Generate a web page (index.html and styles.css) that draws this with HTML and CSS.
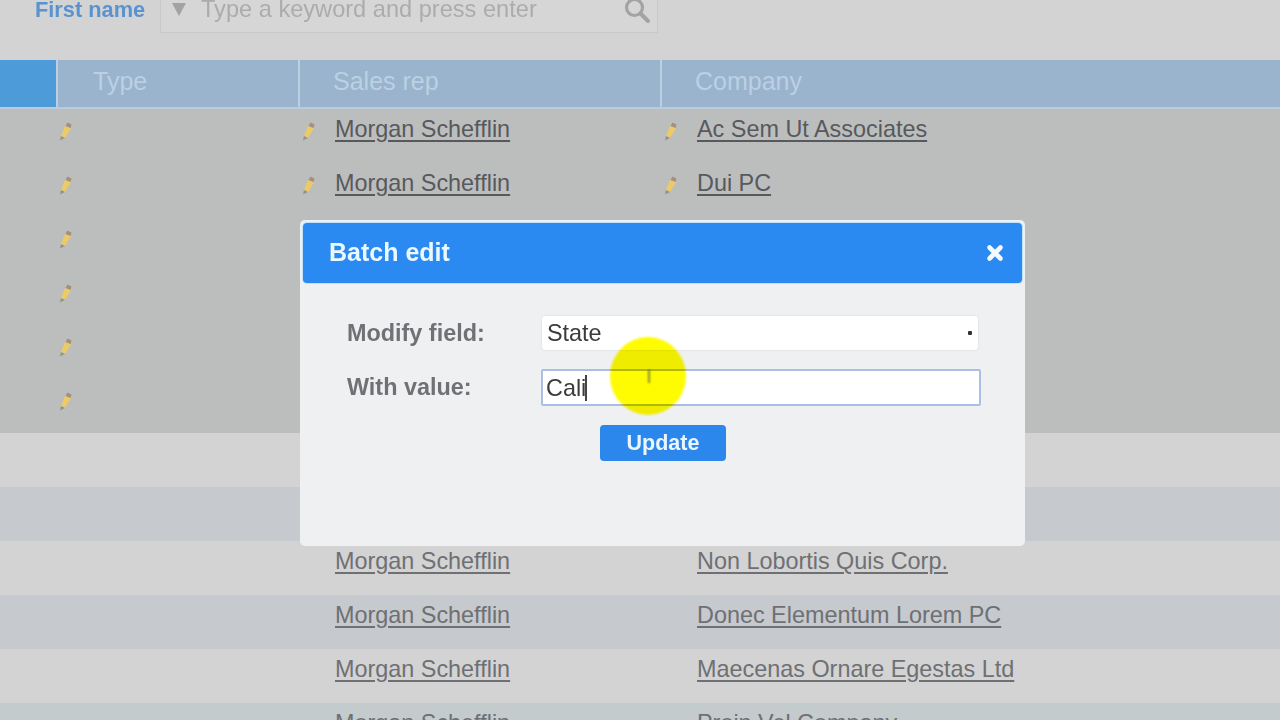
FILE: index.html
```html
<!DOCTYPE html>
<html lang="en">
<head>
<meta charset="utf-8">
<title>Batch edit</title>
<link rel="stylesheet" href="styles.css">
</head>
<body>
<svg class="defs" width="0" height="0" aria-hidden="true">
  <symbol id="pencil" viewBox="0 0 18 22">
    <path d="M4 17 L8 7 L14 9 L8 19 Z" fill="#eccb66"/>
    <path d="M8.5 7 L10.5 3.5 L14.5 5.5 L13.5 9 Z" fill="#a58f7e"/>
    <path d="M4 17 L8 19 L3 21.5 Z" fill="#93938c"/>
  </symbol>
</svg>
<main class="page">
  <div class="filter">
    <label class="filter-label">First name</label>
    <div class="search">
      <span class="caret"></span>
      <span class="placeholder">Type a keyword and press enter</span>
      <svg class="magnifier" viewBox="0 0 28 28" aria-hidden="true">
        <circle cx="11.5" cy="11.5" r="8" fill="none" stroke="#a3a3a3" stroke-width="3.2"/>
        <path d="M17.5 17.5 L25 25" stroke="#a3a3a3" stroke-width="4" stroke-linecap="round"/>
      </svg>
    </div>
  </div>
  <div class="grid">
    <div class="row head">
      <div class="cell check"></div>
      <div class="cell">Type</div>
      <div class="cell">Sales rep</div>
      <div class="cell">Company</div>
    </div>
    <div class="row selected">
      <div class="cell check"></div>
      <div class="cell"><svg class="pen"><use href="#pencil"/></svg></div>
      <div class="cell"><svg class="pen"><use href="#pencil"/></svg><a href="#">Morgan Schefflin</a></div>
      <div class="cell"><svg class="pen"><use href="#pencil"/></svg><a href="#">Ac Sem Ut Associates</a></div>
    </div>
    <div class="row selected">
      <div class="cell check"></div>
      <div class="cell"><svg class="pen"><use href="#pencil"/></svg></div>
      <div class="cell"><svg class="pen"><use href="#pencil"/></svg><a href="#">Morgan Schefflin</a></div>
      <div class="cell"><svg class="pen"><use href="#pencil"/></svg><a href="#">Dui PC</a></div>
    </div>
    <div class="row selected">
      <div class="cell check"></div>
      <div class="cell"><svg class="pen"><use href="#pencil"/></svg></div>
      <div class="cell"></div><div class="cell"></div>
    </div>
    <div class="row selected">
      <div class="cell check"></div>
      <div class="cell"><svg class="pen"><use href="#pencil"/></svg></div>
      <div class="cell"></div><div class="cell"></div>
    </div>
    <div class="row selected">
      <div class="cell check"></div>
      <div class="cell"><svg class="pen"><use href="#pencil"/></svg></div>
      <div class="cell"></div><div class="cell"></div>
    </div>
    <div class="row selected">
      <div class="cell check"></div>
      <div class="cell"><svg class="pen"><use href="#pencil"/></svg></div>
      <div class="cell"></div><div class="cell"></div>
    </div>
    <div class="row light"></div>
    <div class="row mid"></div>
    <div class="row light">
      <div class="cell check"></div><div class="cell"></div>
      <div class="cell"><span class="pen-gap"></span><a href="#">Morgan Schefflin</a></div>
      <div class="cell"><span class="pen-gap"></span><a href="#">Non Lobortis Quis Corp.</a></div>
    </div>
    <div class="row mid">
      <div class="cell check"></div><div class="cell"></div>
      <div class="cell"><span class="pen-gap"></span><a href="#">Morgan Schefflin</a></div>
      <div class="cell"><span class="pen-gap"></span><a href="#">Donec Elementum Lorem PC</a></div>
    </div>
    <div class="row light">
      <div class="cell check"></div><div class="cell"></div>
      <div class="cell"><span class="pen-gap"></span><a href="#">Morgan Schefflin</a></div>
      <div class="cell"><span class="pen-gap"></span><a href="#">Maecenas Ornare Egestas Ltd</a></div>
    </div>
    <div class="row mid last">
      <div class="cell check"></div><div class="cell"></div>
      <div class="cell"><span class="pen-gap"></span><a href="#">Morgan Schefflin</a></div>
      <div class="cell"><span class="pen-gap"></span><a href="#">Proin Vel Company</a></div>
    </div>
  </div>
</main>
<section class="modal">
  <header class="modal-head">
    <h2>Batch edit</h2>
    <svg class="close" viewBox="0 0 18 18" aria-hidden="true">
      <path d="M3.5 3.5 L14.5 14.5 M14.5 3.5 L3.5 14.5" stroke="#f2fbff" stroke-width="4.6" stroke-linecap="round"/>
    </svg>
  </header>
  <div class="modal-body">
    <div class="field">
      <span class="field-label">Modify field:</span>
      <div class="select"><span>State</span><i class="dot"></i></div>
    </div>
    <div class="field">
      <span class="field-label">With value:</span>
      <div class="input"><span>Cali</span><i class="text-caret"></i></div>
    </div>
    <button class="update" type="button">Update</button>
  </div>
</section>
<div class="pointer"><i class="ibeam"></i></div>
</body>
</html>
```

FILE: styles.css
```css
* { box-sizing: border-box; }
html, body { margin: 0; height: 100%; }
body {
  position: relative;
  width: 1280px;
  height: 720px;
  overflow: hidden;
  background: #d3d3d3;
  font-family: "Liberation Sans", Arial, sans-serif;
  font-size: 23.4px;
  color: #5e6063;
}
.defs { position: absolute; }
.page { height: 720px; overflow: hidden; filter: blur(0.6px); }

.filter {
  height: 60px;
  display: flex;
  align-items: flex-end;
  gap: 15px;
  padding: 0 0 27px 35px;
}
.filter-label {
  width: 110px;
  align-self: flex-end;
  margin-bottom: 10px;
  font-size: 21.8px;
  font-weight: 700;
  line-height: 26px;
  color: #5a93cf;
  white-space: nowrap;
}
.search {
  flex: none;
  width: 498px;
  height: 46px;
  display: flex;
  align-items: center;
  padding: 0 6px 0 11px;
  background: #d6d6d6;
  border: 1px solid #c9c9c9;
  border-top: 0;
  color: #acacac;
}
.caret {
  width: 0;
  height: 0;
  margin-right: 15px;
  border-left: 7.5px solid transparent;
  border-right: 7.5px solid transparent;
  border-top: 13px solid #a3a3a3;
}
.placeholder { flex: 1; white-space: nowrap; font-size: 23.6px; }
.magnifier { width: 28px; height: 28px; }

.grid { display: flex; flex-direction: column; }
.row {
  height: 54px;
  flex: none;
  display: grid;
  grid-template-columns: 57px 243px 362px 1fr;
  line-height: 40px;
}
.cell { display: flex; align-items: flex-start; white-space: nowrap; }
.cell a { color: #55575a; text-decoration: underline; text-underline-offset: 3px; }

.head {
  height: 49px;
  grid-template-columns: 56px 242px 362px 1fr;
  background: #9ab4cd;
  border-bottom: 2px solid #bccbdc;
  font-size: 25px;
  line-height: 42px;
  color: #bcd0e4;
}
.head .cell { padding-left: 33px; border-left: 2px solid #bcd0e2; }
.head .cell:nth-child(2) { padding-left: 35px; }
.head .cell.check { padding: 0; border: 0; background: #4d9bd8; }

.selected { background: #bcbebe; }
.selected .cell a { color: #57595c; }
.light { background: #d3d3d3; }
.mid { background: #c6c9cd; }
.light .cell a, .mid .cell a { color: #6e7073; }
.last { background: #c3cbcd; }

.pen { width: 18px; height: 22px; margin: 10px 17px 0 0; flex: none; }
.pen-gap { width: 35px; flex: none; }

.modal {
  position: absolute;
  left: 300px;
  top: 220px;
  width: 725px;
  height: 326px;
  padding: 3px;
  background: #eff0f2;
  border-radius: 5px;
  filter: blur(0.45px);
}
.modal-head {
  height: 60px;
  display: flex;
  align-items: center;
  justify-content: space-between;
  padding: 0 18px 0 26px;
  background: #2b8af1;
  border-radius: 4px;
  box-shadow: 0 0 0 1px #bfe2fb;
}
.modal-head h2 {
  margin: 0 0 2px;
  font-size: 25px;
  font-weight: 700;
  color: #eaf8ff;
}
.close { width: 18px; height: 18px; }

.modal-body {
  display: flex;
  flex-direction: column;
  align-items: flex-start;
  padding: 33px 0 0 44px;
}
.field {
  display: flex;
  align-items: center;
  height: 34px;
  margin-bottom: 20px;
}
.field:last-of-type { margin-bottom: 21px; }
.field-label {
  width: 195px;
  font-weight: 700;
  color: #707175;
}
.select, .input {
  display: flex;
  align-items: center;
  background: #fff;
  color: #3b3b3b;
}
.select {
  width: 436px;
  height: 34px;
  padding: 0 6px 0 5px;
  justify-content: space-between;
  border-radius: 3px;
  box-shadow: 0 0 2px #cfcfcf;
}
.dot { width: 4px; height: 4px; background: #333; border-radius: 1px; }
.input {
  width: 440px;
  height: 37px;
  margin-left: -1px;
  padding: 2px 0 0 3px;
  border: 2px solid #aebde6;
  border-radius: 2px;
}
.text-caret { width: 1.5px; height: 26px; background: #444; margin-left: -1px; }
.update {
  align-self: flex-start;
  width: 126px;
  height: 36px;
  margin: 0 0 0 253px;
  padding: 0;
  border: 0;
  border-radius: 4px;
  background: #2b87ec;
  color: #eaf6ff;
  font-family: inherit;
  font-size: 21.5px;
  font-weight: 700;
}

.pointer {
  position: absolute;
  left: 610px;
  top: 337px;
  width: 76px;
  height: 78px;
  border-radius: 50%;
  background: #fffb00;
  filter: blur(1.2px);
  mix-blend-mode: multiply;
}
.ibeam {
  position: absolute;
  left: 38px;
  top: 33px;
  width: 2px;
  height: 13px;
  background: #8a8a40;
}
```
